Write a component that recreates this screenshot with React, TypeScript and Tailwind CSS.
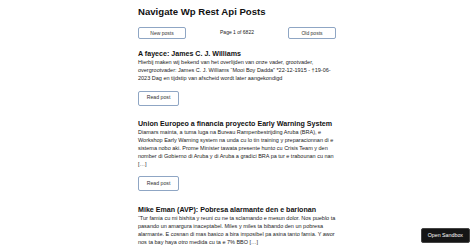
import React from 'react';

type Post = { id: number; title: string; excerpt: string };

const posts: Post[] = [
  {
    id: 1,
    title: 'A fayece: James C. J. Williams',
    excerpt:
      'Hierbij maken wij bekend van het overlijden van onze vader, grootvader, overgrootvader: James C. J. Williams \u201cMooi Boy Dadda\u201d *22-12-1915 - \u202019-06-2023 Dag en tijdstip van afscheid wordt later aangekondigd',
  },
  {
    id: 2,
    title: 'Union Europeo a financia proyecto Early Warning System',
    excerpt:
      'Diamars mainta, a tuma luga na Bureau Rampenbestrijding Aruba (BRA), e Workshop Early Warning system na unda cu lo tin training y preparacionnan di e sistema nobo aki. Prome Minister tawata presente hunto cu Crisis Team y den nomber di Gobierno di Aruba y di Aruba a gradici BRA pa tur e trabounan cu nan [\u2026]',
  },
  {
    id: 3,
    title: 'Mike Eman (AVP): Pobresa alarmante den e barionan',
    excerpt:
      '\u201cTur famia cu mi bishita y reuni cu ne ta sclamando e mesun dolor. Nos pueblo ta pasando un amargura inaceptabel. Miles y miles ta bibando den un pobresa alarmante. E cosnan di mas basico a bira imposibel pa asina tanto famia. Y awor nos ta bay haya otro medida cu ta e 7% BBO [\u2026]',
  },
];

const btn =
  'h-[12px] w-[48px] border border-[#8fa6c4] rounded-[2px] bg-white text-[5px] leading-none text-[#333]';

export default function App() {
  return (
    <div className="relative min-h-[248px] bg-white font-['Liberation_Sans',Arial,sans-serif] text-[#111]">
      <div className="mx-auto w-[198px] pt-[6px]">
        <h1 className="text-[9.6px] font-bold leading-[12px]">Navigate Wp Rest Api Posts</h1>
        <div className="mt-[9px] flex items-center justify-between">
          <button className={btn}>New posts</button>
          <span className="text-[5px] text-[#222]">Page 1 of 6822</span>
          <button className={btn}>Old posts</button>
        </div>
        <div className="mt-[11px] flex flex-col gap-[14px]">
          {posts.map((p) => (
            <div key={p.id}>
              <h2 className="text-[7.1px] font-bold leading-[9px]">{p.title}</h2>
              <p className="text-[5.5px] leading-[7.8px] text-[#222]">{p.excerpt}</p>
              <button className="mt-[1px] h-[15px] w-[41px] border border-[#8fa6c4] rounded-[2px] bg-white text-[5.2px] leading-none text-[#333]">
                Read post
              </button>
            </div>
          ))}
        </div>
      </div>
      <button className="fixed right-[4px] bottom-[5px] h-[15px] px-[6px] rounded-[2px] bg-[#151515] border border-[#444] text-[5.3px] leading-none text-white">
        Open Sandbox
      </button>
    </div>
  );
}
